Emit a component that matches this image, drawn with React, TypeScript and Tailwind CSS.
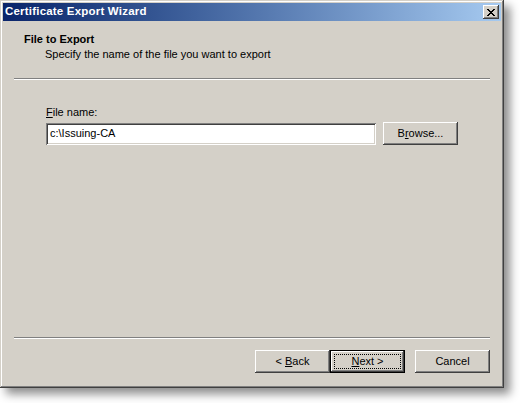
import React from "react"

const font = { fontFamily: '"Liberation Sans", Arial, sans-serif' }

const raised =
  "shadow-[inset_-1px_-1px_#404040,inset_1px_1px_#ffffff,inset_-2px_-2px_#808080,inset_2px_2px_#d4d0c8]"

function Button({
  children,
  isDefault = false,
}: {
  children: React.ReactNode
  isDefault?: boolean
}) {
  if (isDefault) {
    return (
      <div className="w-[75px] h-[23px] border border-black bg-[#d4d0c8]">
        <div className={`h-full w-full p-[3px] ${raised}`}>
          <div className="h-full w-full flex items-center justify-center border border-dotted border-black text-[11px] text-black">
            <span className="whitespace-pre">{children}</span>
          </div>
        </div>
      </div>
    )
  }
  return (
    <div
      className={`w-[75px] h-[23px] bg-[#d4d0c8] flex items-center justify-center text-[11px] text-black ${raised}`}
    >
      <span className="whitespace-pre">{children}</span>
    </div>
  )
}

export default function App() {
  return (
    <div className="min-h-screen bg-white" style={font}>
      {/* Window */}
      <div className="w-[504px] h-[388px] bg-[#d4d0c8] p-[3px] flex flex-col shadow-[inset_-1px_-1px_#404040,inset_1px_1px_#d4d0c8,inset_-2px_-2px_#808080,inset_2px_2px_#ffffff,6px_6px_9px_rgba(0,0,0,0.45)]">
        {/* Title bar */}
        <div className="h-[18px] flex items-center justify-between bg-gradient-to-r from-[#0a246a] to-[#a6caf0] pl-[2px] pr-[2px]">
          <span className="text-[11.5px] font-bold text-white leading-none tracking-[0.2px]">Certificate Export Wizard</span>
          <div className={`w-[16px] h-[14px] bg-[#d4d0c8] flex items-center justify-center ${raised}`}>
            <svg width="8" height="7" viewBox="0 0 8 7" shapeRendering="crispEdges">
              <path
                d="M0 0h2v1h-2zM6 0h2v1h-2zM1 1h2v1h-2zM5 1h2v1h-2zM2 2h4v1h-4zM3 3h2v1h-2zM2 4h4v1h-4zM1 5h2v1h-2zM5 5h2v1h-2zM0 6h2v1h-2zM6 6h2v1h-2z"
                fill="#000"
              />
            </svg>
          </div>
        </div>

        {/* Header */}
        <div className="pt-[12px] pl-[21px] text-[11px] text-black leading-[13px]">
          <div className="font-bold">File to Export</div>
          <div className="mt-[2px] pl-[21px]">Specify the name of the file you want to export</div>
        </div>
        <div className="mt-[17px] mx-[11px] border-t border-[#808080] border-b border-b-white" />

        {/* Body */}
        <div className="flex-1 pt-[26px] pl-[43px] text-[11px] text-black">
          <div className="leading-[13px]">
            <span className="underline">F</span>ile name:
          </div>
          <div className="mt-[3px] flex items-center">
            <div className="w-[330px] h-[22px] bg-white flex items-center pl-[4px] shadow-[inset_1px_1px_#808080,inset_-1px_-1px_#ffffff,inset_2px_2px_#404040,inset_-2px_-2px_#d4d0c8]">
              c:\Issuing-CA
            </div>
            <div className="ml-[7px]">
              <Button>
                B<span className="underline">r</span>owse...
              </Button>
            </div>
          </div>
        </div>

        {/* Footer */}
        <div className="mx-[11px] border-t border-[#808080] border-b border-b-white" />
        <div className="flex justify-end items-center pt-[11px] pb-[12px] pr-[11px]">
          <Button>
            {"< "}
            <span className="underline">B</span>ack
          </Button>
          <Button isDefault>
            <span className="underline">N</span>ext &gt;
          </Button>
          <div className="ml-[10px]">
            <Button>Cancel</Button>
          </div>
        </div>
      </div>
    </div>
  )
}
